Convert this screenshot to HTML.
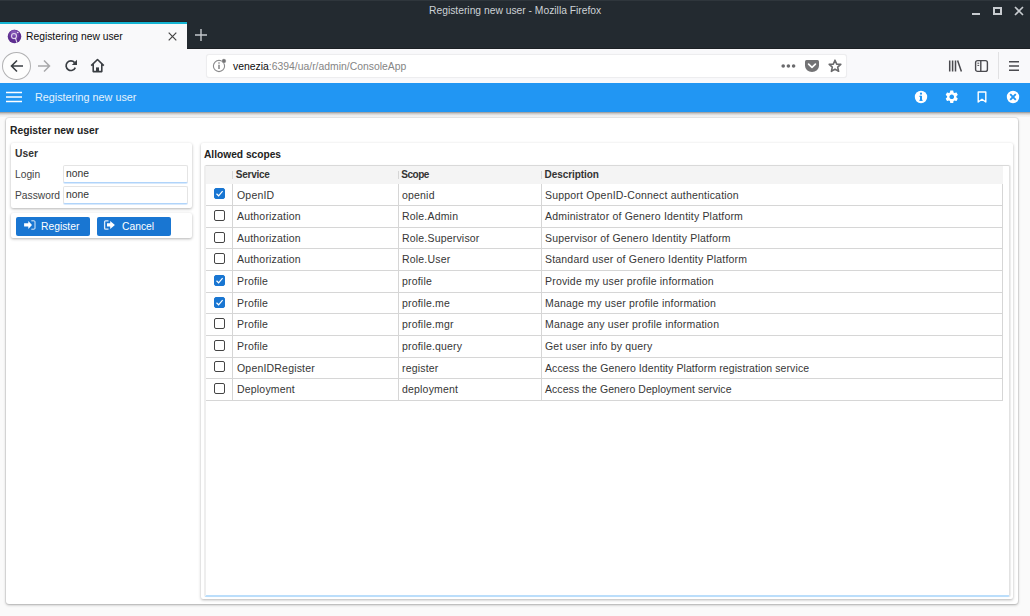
<!DOCTYPE html>
<html><head><meta charset="utf-8">
<style>
*{box-sizing:border-box;margin:0;padding:0}
html,body{width:1030px;height:616px;overflow:hidden}
body{position:relative;background:#fafafa;font-family:"Liberation Sans",sans-serif;color:#333}
.a{position:absolute}
.t{position:absolute;white-space:nowrap;line-height:1}
#titlebar{left:0;top:0;width:1030px;height:49px;background:#232a30}
#tab{left:0;top:22px;width:187px;height:27px;background:#f9f9fa;border-top:2px solid #14b4d2}
#nav{left:0;top:49px;width:1030px;height:34px;background:#f9f9fb}
#url{left:206px;top:54px;width:641px;height:24px;background:#fff;border:1px solid #ededef;border-radius:3px;box-shadow:0 0 1px rgba(0,0,0,.06)}
#appbar{left:0;top:83px;width:1030px;height:29px;background:#2196f3}
#appsh{left:0;top:112px;width:1030px;height:5px;background:linear-gradient(rgba(0,0,0,.42),rgba(0,0,0,.2) 30%,rgba(0,0,0,.06) 65%,rgba(0,0,0,.02))}
#outer{left:6px;top:118px;width:1012px;height:486px;background:#fff;border-radius:3px;box-shadow:0 0 0 1px rgba(0,0,0,.06),0 1px 3px rgba(0,0,0,.28)}
.card{position:absolute;background:#fff;box-shadow:0 1px 3px rgba(0,0,0,.3);border-radius:2px}
.inp{position:absolute;background:#fff;border:1px solid #e4e4e4;border-bottom:1px solid #b0d4fa;border-radius:2px;box-shadow:0 1px 0 #d8e9fc}
.btn{position:absolute;background:#1976d2;border-radius:2px;color:#fff}
#tbl{left:204px;top:165px;width:806px;height:432px;background:#fff;border-top:1px solid #d9d9d9;border-left:2px solid #eee;border-right:1px solid #e2e2e2;border-bottom:2px solid #bbdefb;border-radius:2px;box-shadow:1px 0 1px rgba(0,0,0,.08)}
#thead{left:206px;top:166px;width:797px;height:18px;background:#f4f4f4}
.row{position:absolute;left:206px;width:797px;border-bottom:1px solid #d6d6d6}
.vl{position:absolute;width:1px;background:#d6d6d6}
.cb{position:absolute;left:214px;width:11px;height:11px;border:1.5px solid #444;border-radius:2px}
.cb.on{background:#1976d2;border-color:#1976d2}
.cell{position:absolute;font-size:10.5px;letter-spacing:.19px;color:#363636;white-space:nowrap;line-height:1}
.hd{position:absolute;font-size:10px;font-weight:bold;color:#333;white-space:nowrap;line-height:1}
</style></head><body>
<!-- title bar -->
<div id="titlebar" class="a"></div>
<div class="a" style="left:0;top:0;width:1030px;height:1px;background:#2f363c"></div>
<div class="a" style="left:187px;top:48px;width:843px;height:1px;background:#1c2024"></div>
<div class="a" style="left:0;top:21px;width:187px;height:1px;background:#1f2428"></div>
<div class="t" style="left:429px;top:6px;font-size:10.3px;color:#cdd2d6">Registering new user - Mozilla Firefox</div>
<!-- window controls -->
<div class="a" style="left:972px;top:13.3px;width:8px;height:1.8px;background:#c8ccd0"></div>
<div class="a" style="left:993px;top:6.5px;width:9px;height:8.5px;border:2px solid #c8ccd0"></div>
<svg class="a" style="left:1014px;top:6px" width="10" height="10" viewBox="0 0 10 10"><path d="M1 1L9 9M9 1L1 9" stroke="#c8ccd0" stroke-width="1.6"/></svg>
<!-- tab -->
<div id="tab" class="a"></div>
<div class="t" style="left:26px;top:31.5px;font-size:10.3px;color:#0c0c0d">Registering new user</div>
<!-- new tab plus -->
<svg class="a" style="left:195px;top:29px" width="12" height="12" viewBox="0 0 12 12"><path d="M6 0V12M0 6H12" stroke="#c4c8cc" stroke-width="1.4"/></svg>
<!-- nav -->
<div id="nav" class="a"></div>
<div id="url" class="a"></div>
<div class="t" style="left:233px;top:62px;font-size:10.4px;color:#858585"><span style="color:#0c0c0d">venezia</span>:6394/ua/r/admin/ConsoleApp</div>
<!-- app bar -->
<div id="appbar" class="a"></div>
<div id="appsh" class="a"></div>
<div class="t" style="left:35px;top:91.8px;font-size:10.8px;color:#e3f2fd">Registering new user</div>
<!-- content -->
<div id="outer" class="a"></div>
<div class="t" style="left:10px;top:125.7px;font-size:10.3px;font-weight:bold;color:#222">Register new user</div>
<div class="card" style="left:11px;top:143px;width:181px;height:65px"></div>
<div class="t" style="left:15px;top:149px;font-size:10.3px;font-weight:bold;color:#333">User</div>
<div class="t" style="left:15px;top:170px;font-size:10.25px;color:#444">Login</div>
<div class="t" style="left:15px;top:190.7px;font-size:10.25px;color:#444">Password</div>
<div class="inp" style="left:63px;top:165px;width:125px;height:18px"></div>
<div class="inp" style="left:63px;top:186px;width:125px;height:18px"></div>
<div class="t" style="left:66px;top:169px;font-size:10.3px;color:#333">none</div>
<div class="t" style="left:66px;top:190px;font-size:10.3px;color:#333">none</div>
<div class="card" style="left:11px;top:213px;width:181px;height:25px"></div>
<div class="btn" style="left:16px;top:217px;width:74px;height:19px"></div>
<div class="btn" style="left:97px;top:217px;width:74px;height:19px"></div>
<div class="t" style="left:41px;top:222px;font-size:10.3px;color:#fff">Register</div>
<div class="t" style="left:122px;top:222px;font-size:10.3px;color:#fff">Cancel</div>
<!-- scopes card -->
<div class="card" style="left:201px;top:143px;width:812px;height:456px"></div>
<div class="t" style="left:204px;top:149.6px;font-size:10.2px;font-weight:bold;color:#222">Allowed scopes</div>
<div id="tbl" class="a"></div>
<div id="thead" class="a"></div>

<!-- favicon -->
<svg class="a" style="left:6.7px;top:28.7px" width="15" height="15" viewBox="0 0 15 15"><circle cx="7.5" cy="7.5" r="6.8" fill="#5e2e90"/><circle cx="7.2" cy="5.8" r="5" fill="#7444a8" opacity=".8"/><circle cx="7" cy="4.2" r="3" fill="#9068c0" opacity=".6"/><circle cx="7" cy="7" r="2.5" fill="none" stroke="#fff" stroke-width="1.2" opacity=".75"/><path d="M8.5 9.2L9.9 13.6" stroke="#fff" stroke-width="1.1" opacity=".85"/><circle cx="10.8" cy="3.5" r=".8" fill="#fff" opacity=".9"/></svg>
<!-- tab close -->
<svg class="a" style="left:168px;top:31.5px" width="9" height="9" viewBox="0 0 9 9"><path d="M.7 .7L8.3 8.3M8.3 .7L.7 8.3" stroke="#444" stroke-width="1.2"/></svg>
<!-- back -->
<div class="a" style="left:2px;top:52px;width:29px;height:28px;border-radius:50%;border:1px solid #b1b1b3;background:#fdfdfd"></div>
<svg class="a" style="left:10px;top:59px" width="14" height="14" viewBox="0 0 14 14"><path d="M13 7H1.8M7 1.5L1.5 7L7 12.5" fill="none" stroke="#3a3e43" stroke-width="1.6"/></svg>
<!-- forward -->
<svg class="a" style="left:37px;top:59px" width="14" height="14" viewBox="0 0 14 14"><path d="M1 7H12.2M7 1.5L12.5 7L7 12.5" fill="none" stroke="#a8a8aa" stroke-width="1.5"/></svg>
<!-- reload -->
<svg class="a" style="left:64px;top:59px" width="14" height="14" viewBox="0 0 14 14"><path d="M11.3 8.6A4.8 4.8 0 1 1 10.6 3.6" fill="none" stroke="#3a3e43" stroke-width="1.7"/><path d="M13 0.8V6H7.8Z" fill="#3a3e43"/></svg>
<!-- home -->
<svg class="a" style="left:90px;top:58px" width="15" height="15" viewBox="0 0 15 15"><path d="M1.2 7.6L7.5 1.5L13.8 7.6M3.2 6.2V13.6H11.8V6.2" fill="none" stroke="#3a3e43" stroke-width="1.6" stroke-linejoin="round"/><rect x="6" y="9.4" width="3" height="4.4" fill="#3a3e43"/></svg>
<!-- url info -->
<svg class="a" style="left:212px;top:58px" width="16" height="15" viewBox="0 0 16 15"><circle cx="7" cy="8" r="5.6" fill="none" stroke="#8a8a8c" stroke-width="1.1"/><path d="M7 6.8V11" stroke="#7a7a7c" stroke-width="1.4"/><circle cx="7" cy="5" r=".8" fill="#7a7a7c"/><circle cx="11.9" cy="3" r="2.3" fill="#737375" stroke="#fff" stroke-width=".5"/></svg>
<!-- dots -->
<svg class="a" style="left:781px;top:63px" width="15" height="6" viewBox="0 0 15 6"><circle cx="2.2" cy="3" r="1.8" fill="#6a6a6c"/><circle cx="7.4" cy="3" r="1.8" fill="#6a6a6c"/><circle cx="12.6" cy="3" r="1.8" fill="#6a6a6c"/></svg>
<!-- pocket -->
<svg class="a" style="left:805px;top:59px" width="14" height="14" viewBox="0 0 14 14"><path d="M0 2.5Q0 1 1.5 1H12.5Q14 1 14 2.5V6.8A7 6.2 0 0 1 0 6.8Z" fill="#737375"/><path d="M3.6 5.2L7 8.4L10.4 5.2" fill="none" stroke="#fff" stroke-width="1.7" stroke-linecap="round" stroke-linejoin="round"/></svg>
<!-- star -->
<svg class="a" style="left:828px;top:59px" width="14" height="14" viewBox="0 0 14 14"><path d="M7 1.2L8.7 5.1L12.8 5.4L9.7 8.1L10.6 12.3L7 10.1L3.4 12.3L4.3 8.1L1.2 5.4L5.3 5.1Z" fill="none" stroke="#6a6a6c" stroke-width="1.6" stroke-linejoin="round"/></svg>
<!-- library -->
<svg class="a" style="left:948px;top:59px" width="15" height="14" viewBox="0 0 15 14"><path d="M1.7 1.5V12.5M4.6 1.5V12.5M7.5 1.5V12.5M9.6 1.6L13.4 12.5" stroke="#4a4a4f" stroke-width="1.5"/></svg>
<!-- sidebar -->
<svg class="a" style="left:974px;top:59px" width="15" height="14" viewBox="0 0 15 14"><rect x="1.6" y="1.6" width="11.8" height="10.8" rx="2" fill="none" stroke="#4a4a4f" stroke-width="1.4"/><path d="M6.8 1.6V12.4" stroke="#4a4a4f" stroke-width="1.4"/><path d="M3.4 4.2H5.2M3.4 6.4H5.2" stroke="#4a4a4f" stroke-width="1"/></svg>
<div class="a" style="left:998px;top:52px;width:1px;height:27px;background:#e1e1e3"></div>
<!-- hamburger -->
<svg class="a" style="left:1008px;top:60px" width="12" height="12" viewBox="0 0 12 12"><path d="M1 1.8H11M1 6H11M1 10.2H11" stroke="#4a4a4f" stroke-width="1.5"/></svg>
<!-- app hamburger -->
<svg class="a" style="left:5px;top:90px" width="18" height="14" viewBox="0 0 18 14"><path d="M1 2.5H17M1 7H17M1 11.5H17" stroke="#fff" stroke-width="1.6"/></svg>
<!-- app icons -->
<svg class="a" style="left:914px;top:90px" width="14" height="14" viewBox="0 0 14 14"><circle cx="7" cy="7" r="6.2" fill="#fff"/><rect x="6" y="5.8" width="2" height="5" fill="#2196f3"/><rect x="5.3" y="5.8" width="1.5" height="1" fill="#2196f3"/><rect x="5.3" y="9.8" width="3.4" height="1" fill="#2196f3"/><circle cx="7" cy="3.7" r="1.1" fill="#2196f3"/></svg>
<svg class="a" style="left:943.5px;top:89.3px" width="15.5" height="15.5" viewBox="0 0 24 24"><path fill="#fff" d="M19.14 12.94c.04-.3.06-.61.06-.94 0-.32-.02-.64-.07-.94l2.03-1.58a.49.49 0 0 0 .12-.61l-1.92-3.32a.488.488 0 0 0-.59-.22l-2.39.96c-.5-.38-1.03-.7-1.62-.94l-.36-2.54a.484.484 0 0 0-.48-.41h-3.84c-.24 0-.43.17-.47.41l-.36 2.54c-.59.24-1.13.57-1.62.94l-2.39-.96c-.22-.08-.47 0-.59.22L2.74 8.87c-.12.21-.08.47.12.61l2.03 1.58c-.05.3-.09.63-.09.94s.02.64.07.94l-2.03 1.58a.49.49 0 0 0-.12.61l1.92 3.32c.12.22.37.29.59.22l2.39-.96c.5.38 1.03.7 1.62.94l.36 2.54c.05.24.24.41.48.41h3.84c.24 0 .44-.17.47-.41l.36-2.54c.59-.24 1.13-.56 1.62-.94l2.39.96c.22.08.47 0 .59-.22l1.92-3.32c.12-.22.07-.47-.12-.61l-2.01-1.58zM12 15.6c-1.98 0-3.6-1.62-3.6-3.6s1.62-3.6 3.6-3.6 3.6 1.62 3.6 3.6-1.62 3.6-3.6 3.6z"/></svg>
<svg class="a" style="left:977px;top:91px" width="10" height="12" viewBox="0 0 10 12"><path d="M1.2 1H8.8V11L5 8.2L1.2 11Z" fill="none" stroke="#fff" stroke-width="1.4" stroke-linejoin="round"/></svg>
<svg class="a" style="left:1006px;top:90px" width="14" height="14" viewBox="0 0 14 14"><circle cx="7" cy="7" r="6.2" fill="#fff"/><path d="M4.2 4.2L9.8 9.8M9.8 4.2L4.2 9.8" stroke="#2196f3" stroke-width="1.9"/></svg>
<!-- button icons -->
<svg class="a" style="left:23px;top:220px" width="13" height="10" viewBox="0 0 13 10"><path d="M1.1 3.2H5.3V1.1L9 4.9L5.3 8.9V6.5H1.1Z" fill="#fff"/><path d="M8.3 0.8H11Q12 0.8 12 1.8V8.2Q12 9.2 11 9.2H8.3" fill="none" stroke="#fff" stroke-width="1" opacity=".85"/></svg>
<svg class="a" style="left:103px;top:220px" width="13" height="10" viewBox="0 0 13 10"><path d="M5.5 0.8H2.6Q1.6 0.8 1.6 1.8V8.2Q1.6 9.2 2.6 9.2H5.5" fill="none" stroke="#fff" stroke-width="1.3" opacity=".85"/><path d="M4 3.2H7.2V1.1L11.9 4.9L7.2 8.9V6.5H4Z" fill="#fff"/></svg>
<!--ROWS-->
<div class="vl" style="left:232px;top:171px;height:8px"></div>
<div class="vl" style="left:398px;top:171px;height:8px"></div>
<div class="vl" style="left:541px;top:171px;height:8px"></div>
<div class="hd" style="left:235.8px;top:169.6px;letter-spacing:-.26px">Service</div>
<div class="hd" style="left:401.3px;top:169.6px;letter-spacing:-.5px">Scope</div>
<div class="hd" style="left:544.6px;top:169.6px;letter-spacing:-.07px">Description</div>
<div class="vl" style="left:232px;top:184px;height:216.30px"></div>
<div class="vl" style="left:398px;top:184px;height:216.30px"></div>
<div class="vl" style="left:541px;top:184px;height:216.30px"></div>
<div class="vl" style="left:1002px;top:184px;height:216.30px"></div>
<div class="a" style="left:206px;top:205px;width:797px;height:1px;background:#d6d6d6"></div>
<div class="cb on" style="top:188px"></div>
<svg class="a" style="left:215px;top:189px" width="9" height="9" viewBox="0 0 9 9"><path d="M1.5 4.8L3.6 6.8L7.6 2.2" fill="none" stroke="#fff" stroke-width="1.2"/></svg>
<div class="cell" style="left:237px;top:189.60px">OpenID</div>
<div class="cell" style="left:402px;top:189.60px">openid</div>
<div class="cell" style="left:545px;top:189.60px">Support OpenID-Connect authentication</div>
<div class="a" style="left:206px;top:227px;width:797px;height:1px;background:#d6d6d6"></div>
<div class="cb" style="top:210px"></div>
<div class="cell" style="left:237px;top:211.23px">Authorization</div>
<div class="cell" style="left:402px;top:211.23px">Role.Admin</div>
<div class="cell" style="left:545px;top:211.23px">Administrator of Genero Identity Platform</div>
<div class="a" style="left:206px;top:248px;width:797px;height:1px;background:#d6d6d6"></div>
<div class="cb" style="top:232px"></div>
<div class="cell" style="left:237px;top:232.86px">Authorization</div>
<div class="cell" style="left:402px;top:232.86px">Role.Supervisor</div>
<div class="cell" style="left:545px;top:232.86px">Supervisor of Genero Identity Platform</div>
<div class="a" style="left:206px;top:270px;width:797px;height:1px;background:#d6d6d6"></div>
<div class="cb" style="top:253px"></div>
<div class="cell" style="left:237px;top:254.49px">Authorization</div>
<div class="cell" style="left:402px;top:254.49px">Role.User</div>
<div class="cell" style="left:545px;top:254.49px">Standard user of Genero Identity Platform</div>
<div class="a" style="left:206px;top:292px;width:797px;height:1px;background:#d6d6d6"></div>
<div class="cb on" style="top:275px"></div>
<svg class="a" style="left:215px;top:276px" width="9" height="9" viewBox="0 0 9 9"><path d="M1.5 4.8L3.6 6.8L7.6 2.2" fill="none" stroke="#fff" stroke-width="1.2"/></svg>
<div class="cell" style="left:237px;top:276.12px">Profile</div>
<div class="cell" style="left:402px;top:276.12px">profile</div>
<div class="cell" style="left:545px;top:276.12px">Provide my user profile information</div>
<div class="a" style="left:206px;top:313px;width:797px;height:1px;background:#d6d6d6"></div>
<div class="cb on" style="top:297px"></div>
<svg class="a" style="left:215px;top:298px" width="9" height="9" viewBox="0 0 9 9"><path d="M1.5 4.8L3.6 6.8L7.6 2.2" fill="none" stroke="#fff" stroke-width="1.2"/></svg>
<div class="cell" style="left:237px;top:297.75px">Profile</div>
<div class="cell" style="left:402px;top:297.75px">profile.me</div>
<div class="cell" style="left:545px;top:297.75px">Manage my user profile information</div>
<div class="a" style="left:206px;top:335px;width:797px;height:1px;background:#d6d6d6"></div>
<div class="cb" style="top:318px"></div>
<div class="cell" style="left:237px;top:319.38px">Profile</div>
<div class="cell" style="left:402px;top:319.38px">profile.mgr</div>
<div class="cell" style="left:545px;top:319.38px">Manage any user profile information</div>
<div class="a" style="left:206px;top:357px;width:797px;height:1px;background:#d6d6d6"></div>
<div class="cb" style="top:340px"></div>
<div class="cell" style="left:237px;top:341.01px">Profile</div>
<div class="cell" style="left:402px;top:341.01px">profile.query</div>
<div class="cell" style="left:545px;top:341.01px">Get user info by query</div>
<div class="a" style="left:206px;top:378px;width:797px;height:1px;background:#d6d6d6"></div>
<div class="cb" style="top:361px"></div>
<div class="cell" style="left:237px;top:362.64px">OpenIDRegister</div>
<div class="cell" style="left:402px;top:362.64px">register</div>
<div class="cell" style="left:545px;top:362.64px;letter-spacing:.09px">Access the Genero Identity Platform registration service</div>
<div class="a" style="left:206px;top:400px;width:797px;height:1px;background:#d6d6d6"></div>
<div class="cb" style="top:383px"></div>
<div class="cell" style="left:237px;top:384.27px">Deployment</div>
<div class="cell" style="left:402px;top:384.27px">deployment</div>
<div class="cell" style="left:545px;top:384.27px;letter-spacing:.06px">Access the Genero Deployment service</div>
<!--/ROWS-->
</body></html>
